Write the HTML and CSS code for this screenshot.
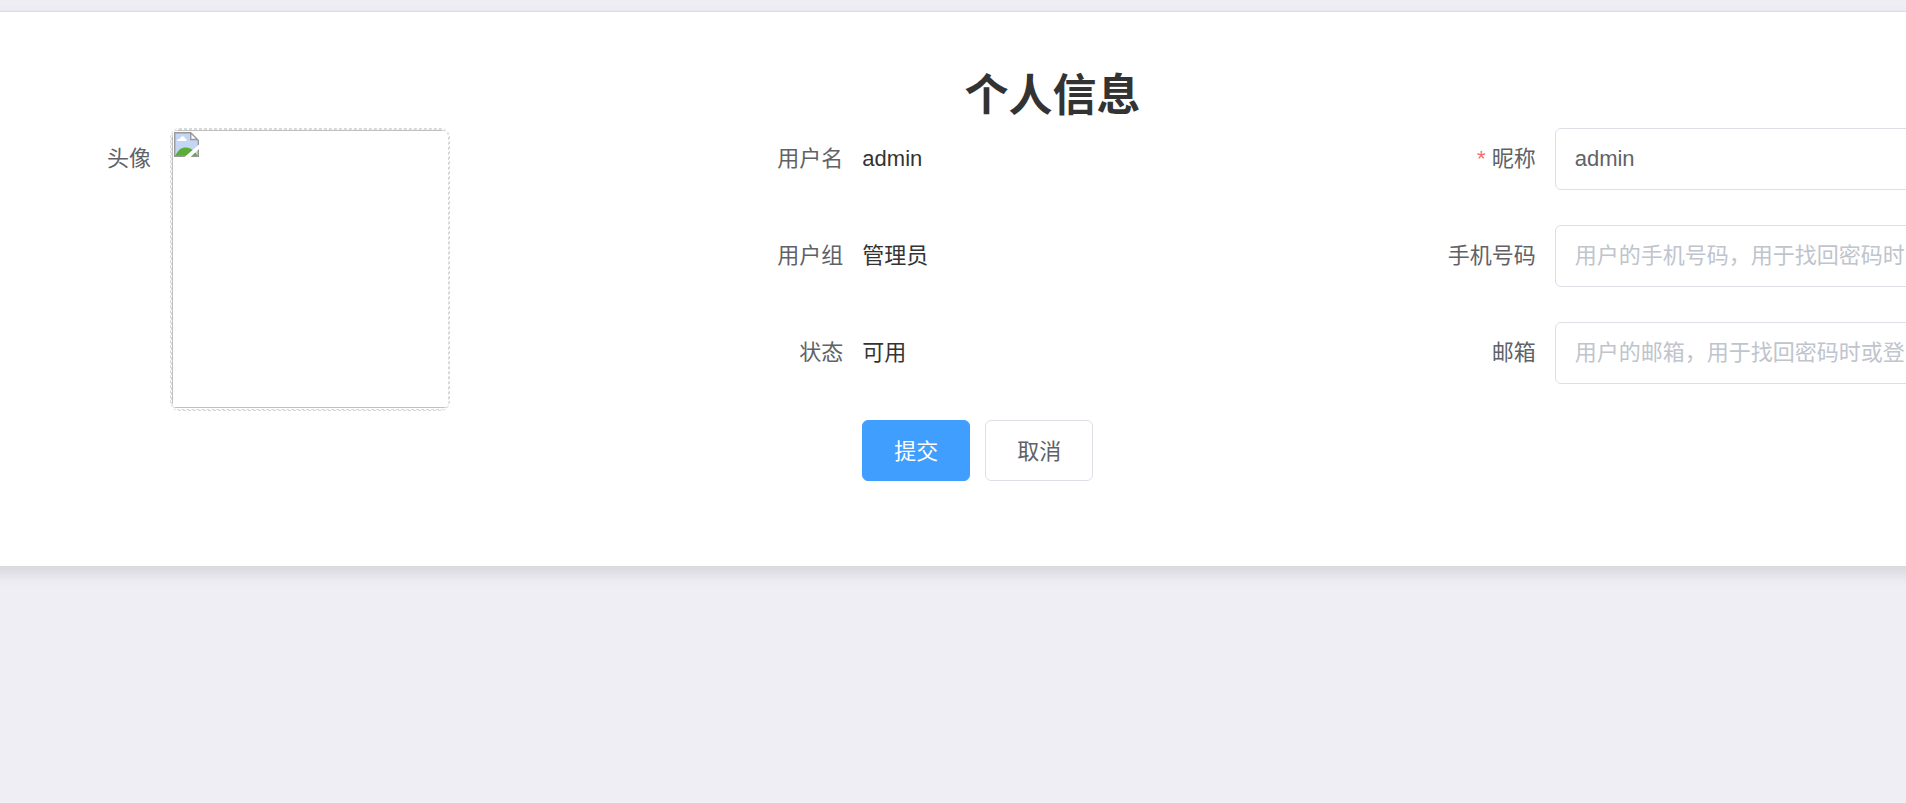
FILE: index.html
```html
<!DOCTYPE html>
<html lang="zh-CN">
<head>
    <meta charset="UTF-8">
    <meta name="viewport" content="width=device-width, initial-scale=1.0">
    <title>个人信息</title>
    <link rel="stylesheet" href="styles.css">
</head>
<body>
    <main class="card">
        <h1 class="title">个人信息</h1>
        <form class="form">
            <!-- Avatar -->
            <div class="column">
                <div class="form-item">
                    <span class="label">头像</span>
                    <div class="avatar">
                        <div class="avatar-edge">
                            <div class="avatar-image">
                                <svg class="broken" viewBox="0 0 25 25" role="img" aria-label="头像">
                                    <path d="M.5.5H17L24.5 8V24.5H.5Z" fill="#c4d5f5"/>
                                    <path d="M3 9C3 7.5 4.500 6.500 6 7C6.500 3.500 10.500 3.500 11 6.500C13 6.500 13 9 12 9Z" fill="#fff"/>
                                    <path d="M1 24C4 18 7 15.500 12 15.500S20 19 24 24Z" fill="#5aad36"/>
                                    <path d="M17 .5V7.500H24.500Z" fill="#fff"/>
                                    <path d="M.7 24.300V.7H16.700L24.300 8.300V24.300ZM16.700 .7V7.500H24" fill="none" stroke="#999" stroke-width="1.400"/>
                                    <path d="M10 25.500L25.500 12V16.500L16 25.500Z" fill="#fff"/>
                                </svg>
                            </div>
                        </div>
                    </div>
                </div>
            </div>
            <!-- Account -->
            <div class="column">
                <div class="form-item">
                    <span class="label">用户名</span>
                    <span class="value">admin</span>
                </div>
                <div class="form-item">
                    <span class="label">用户组</span>
                    <span class="value">管理员</span>
                </div>
                <div class="form-item">
                    <span class="label">状态</span>
                    <span class="value">可用</span>
                </div>
                <div class="form-item actions">
                    <button class="btn btn-primary" type="submit">提交</button>
                    <button class="btn" type="button">取消</button>
                </div>
            </div>
            <!-- Contact -->
            <div class="column">
                <div class="form-item">
                    <label class="label required" for="nickname">昵称</label>
                    <input class="input" id="nickname" type="text" value="admin" required>
                </div>
                <div class="form-item">
                    <label class="label" for="phone">手机号码</label>
                    <input class="input" id="phone" type="tel" placeholder="用户的手机号码，用于找回密码时或登录">
                </div>
                <div class="form-item">
                    <label class="label" for="email">邮箱</label>
                    <input class="input" id="email" type="email" placeholder="用户的邮箱，用于找回密码时或登录">
                </div>
            </div>
        </form>
    </main>
</body>
</html>
```
FILE: styles.css
```css
* {
    box-sizing: border-box;
}
body {
    margin: 0;
    padding-top: 11px;
    min-height: 100vh;
    overflow-x: hidden;
    background: #eeeef4;
    color: #333;
    font-family: "Liberation Sans", "Noto Sans CJK SC", sans-serif;
    font-size: 22px;
}
.card {
    min-width: 2126px;
    margin-left: -20px;
    padding: 52px 15px 85px 34px;
    background: #fff;
    border-top: 1px solid #dcdcdf;
    box-shadow: 0 7px 14px rgba(0, 0, 0, 0.11);
}
.title {
    margin: 0;
    font-size: 44px;
    line-height: 64px;
    text-align: center;
}
.form {
    display: grid;
    grid-template-columns: repeat(3, 1fr);
}
.column {
    display: flex;
    flex-direction: column;
    gap: 35px;
}
.form-item {
    display: flex;
    align-items: flex-start;
    min-height: 62px;
    line-height: 62px;
}
.label {
    flex: none;
    width: 156px;
    padding-right: 19px;
    color: #606266;
    text-align: right;
}
.required::before {
    content: "*";
    margin-right: 6px;
    color: #f56c6c;
}
.avatar {
    width: 280px;
    height: 283px;
    border: 1px dashed #d9d9d9;
    border-radius: 9px;
    overflow: hidden;
}
.avatar-edge {
    height: 100%;
    border: 1px dashed #d9d9d9;
    border-radius: 8px;
    overflow: hidden;
}
.avatar-image {
    height: 278px;
    padding: 1px;
    border: 1px solid #c0c0c0;
    border-right: none;
}
.broken {
    display: block;
    width: 25px;
    height: 25px;
}
.input {
    flex: 1;
    min-width: 0;
    height: 62px;
    padding: 0 19px;
    border: 1px solid #dcdfe6;
    border-radius: 6px;
    background: #fff;
    color: #606266;
    font: inherit;
    outline: none;
}
.input::placeholder {
    color: #c0c4cc;
}
.input:focus {
    border-color: #409eff;
}
.actions {
    align-items: flex-end;
    gap: 15px;
    padding-left: 156px;
}
.btn {
    height: 61px;
    padding: 0 31px;
    border: 1px solid #dcdfe6;
    border-radius: 6px;
    background: #fff;
    color: #606266;
    font: inherit;
    cursor: pointer;
}
.btn-primary {
    border-color: #409eff;
    background: #409eff;
    color: #fff;
}
```
